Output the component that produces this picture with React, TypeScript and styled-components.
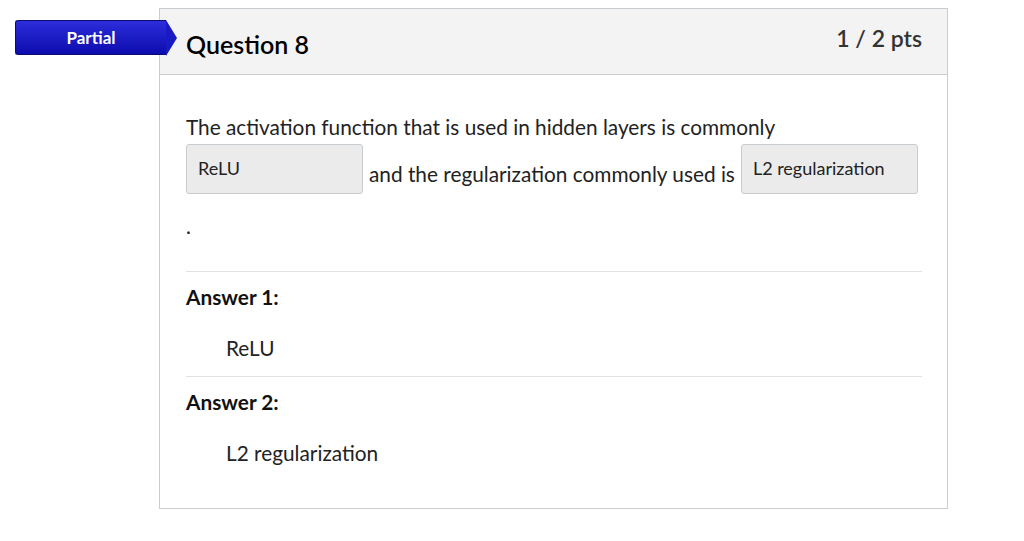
import React from 'react';
import styled, { createGlobalStyle } from 'styled-components';

const GlobalStyle = createGlobalStyle`
  body {
    margin: 0;
    background: #ffffff;
    font-family: Lato, "Open Sans", sans-serif;
    color: #222222;
  }
`;

const Page = styled.div`
  position: relative;
  padding: 8px 0 0 159px;
  height: 533px;
`;

const Badge = styled.div`
  position: absolute;
  left: 15px;
  top: 20px;
  width: 151px;
  height: 35px;
  display: flex;
  align-items: center;
  justify-content: center;
  box-sizing: border-box;
  color: #ffffff;
  font-weight: 700;
  font-size: 17px;
  background: linear-gradient(#2d2ddb, #0c0cae);
  border: 1px solid #0a0a70;
  border-right: none;
  border-radius: 3px 0 0 3px;
  z-index: 2;

  &::after {
    content: '';
    position: absolute;
    right: -11px;
    top: -1px;
    width: 0;
    height: 0;
    border-top: 18px solid transparent;
    border-bottom: 18px solid transparent;
    border-left: 11px solid #1a1ac4;
  }
`;

const Card = styled.div`
  width: 789px;
  box-sizing: border-box;
  border: 1px solid #c7cdd1;
`;

const Header = styled.div`
  height: 65px;
  background: #f3f3f3;
  border-bottom: 1px solid #c7cdd1;
  display: flex;
  justify-content: space-between;
  align-items: flex-start;
  padding: 0 25px 0 26px;
`;

const Title = styled.h2`
  margin: 20px 0 0;
  font-size: 25px;
  font-weight: 600;
  color: #000000;
`;

const Points = styled.div`
  margin-top: 15px;
  font-size: 23px;
  font-weight: 600;
  color: #333333;
`;

const Body = styled.div`
  padding: 40px 25px 27px 26px;
  font-size: 20.8px;
  line-height: 24px;
`;

const TextLine = styled.div`
  margin-bottom: 5px;
`;

const BlankLine = styled.div`
  display: flex;
  align-items: flex-start;
  height: 50px;
`;

const Blank = styled.span`
  width: 177px;
  height: 50px;
  box-sizing: border-box;
  padding: 12px 11px 0;
  font-size: 18px;
  line-height: 22px;
  background: #ebebeb;
  border: 1px solid #c7cdd1;
  border-radius: 3px;
`;

const Joiner = styled.span`
  padding: 18px 6px 0;
  white-space: nowrap;
`;

const Period = styled.div`
  margin-top: 20px;
`;

const Divider = styled.hr<{ $gap?: number }>`
  border: none;
  border-top: 1px solid #e0e3e5;
  margin: ${(p) => p.$gap ?? 0}px 0 0;
`;

const AnswerBlock = styled.div`
  padding-top: 13px;
`;

const AnswerLabel = styled.div`
  font-weight: 700;
  color: #111111;
`;

const AnswerValue = styled.div`
  padding: 27px 0 16px 40px;
`;

const answers = [
  { label: 'Answer 1:', value: 'ReLU' },
  { label: 'Answer 2:', value: 'L2 regularization' },
];

export default function App() {
  return (
    <Page>
      <GlobalStyle />
      <Badge>Partial</Badge>
      <Card>
        <Header>
          <Title>Question 8</Title>
          <Points>1 / 2 pts</Points>
        </Header>
        <Body>
          <TextLine>
            The activation function that is used in hidden layers is commonly
          </TextLine>
          <BlankLine>
            <Blank>ReLU</Blank>
            <Joiner>and the regularization commonly used is</Joiner>
            <Blank>L2 regularization</Blank>
          </BlankLine>
          <Period>.</Period>
          <Divider $gap={33} />
          {answers.map((a, i) => (
            <React.Fragment key={a.label}>
              {i > 0 && <Divider />}
              <AnswerBlock>
                <AnswerLabel>{a.label}</AnswerLabel>
                <AnswerValue>{a.value}</AnswerValue>
              </AnswerBlock>
            </React.Fragment>
          ))}
        </Body>
      </Card>
    </Page>
  );
}
